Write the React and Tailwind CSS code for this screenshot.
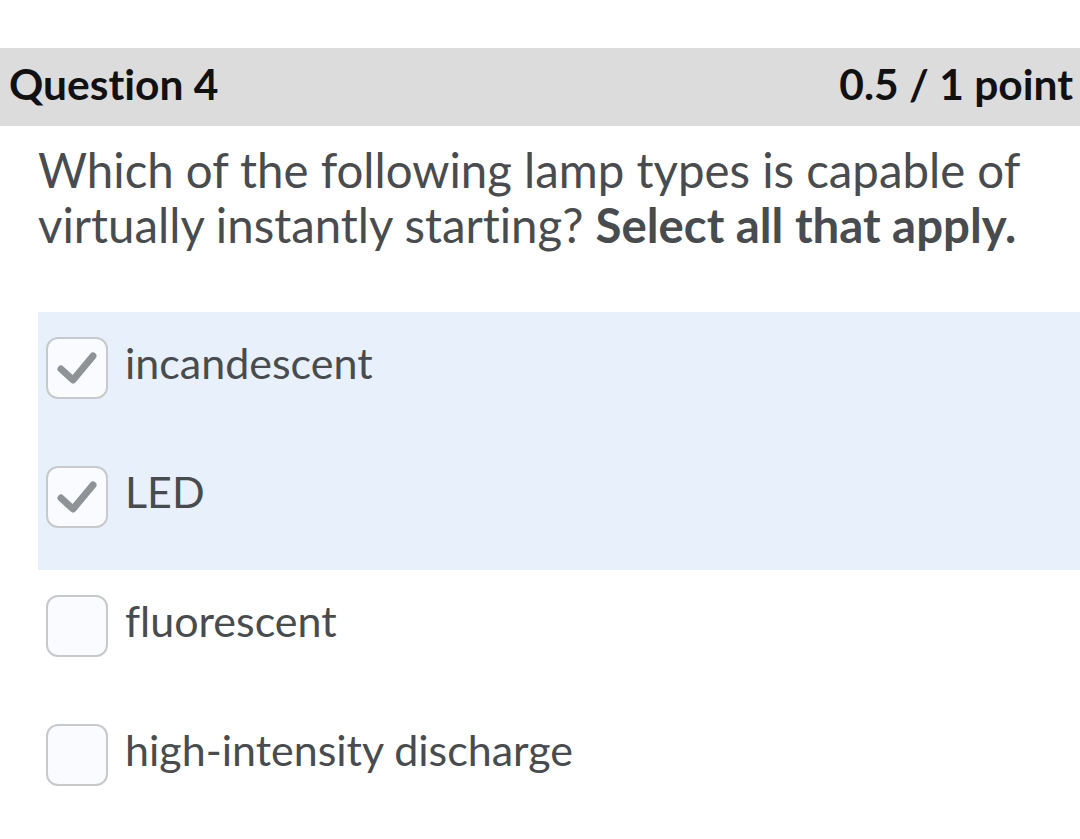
import React from 'react'

const OPTIONS = [
  { label: 'incandescent', checked: true },
  { label: 'LED', checked: true },
  { label: 'fluorescent', checked: false },
  { label: 'high-intensity discharge', checked: false },
]

function Checkbox({ checked }) {
  return (
    <div className="w-[62px] h-[62px] shrink-0 rounded-[12px] border-2 border-[#c8c9cb] bg-[#f9fbfe]">
      {checked && (
        <svg width="58" height="58" viewBox="0 0 58 58">
          <path d="M13 30 L25 41 L45 17" fill="none" stroke="#8f9398" strokeWidth="7" strokeLinecap="round" strokeLinejoin="round" />
        </svg>
      )}
    </div>
  )
}

export default function App() {
  return (
    <div className="w-[1080px] h-[839px] bg-white overflow-hidden [font-variant-ligatures:none]" style={{ fontFamily: 'Lato, "Open Sans", sans-serif' }}>
      <div className="h-[48px]"></div>
      <div className="h-[78px] bg-[#dcdcdc] flex items-center justify-between pl-[9px] pr-[7px] pb-[6px] text-[#111] font-bold text-[42.5px]">
        <span>Question 4</span>
        <span>0.5 / 1 point</span>
      </div>
      <div className="pl-[38px] pt-[16px] text-[#494c4e] text-[47.4px] leading-[55px]">
        Which of the following lamp types is capable of virtually instantly starting? <span className="font-bold">Select all that apply.</span>
      </div>
      <div className="mt-[60px] ml-[38px]">
        {OPTIONS.map((o, i) => (
          <div key={i} className={`h-[129px] flex items-start pt-[25px] pl-[8px] gap-[17px] ${o.checked ? 'bg-[#e8f1fb]' : ''}`}>
            <Checkbox checked={o.checked} />
            <span className="text-[#494c4e] text-[43px] leading-[52px]">{o.label}</span>
          </div>
        ))}
      </div>
    </div>
  )
}
